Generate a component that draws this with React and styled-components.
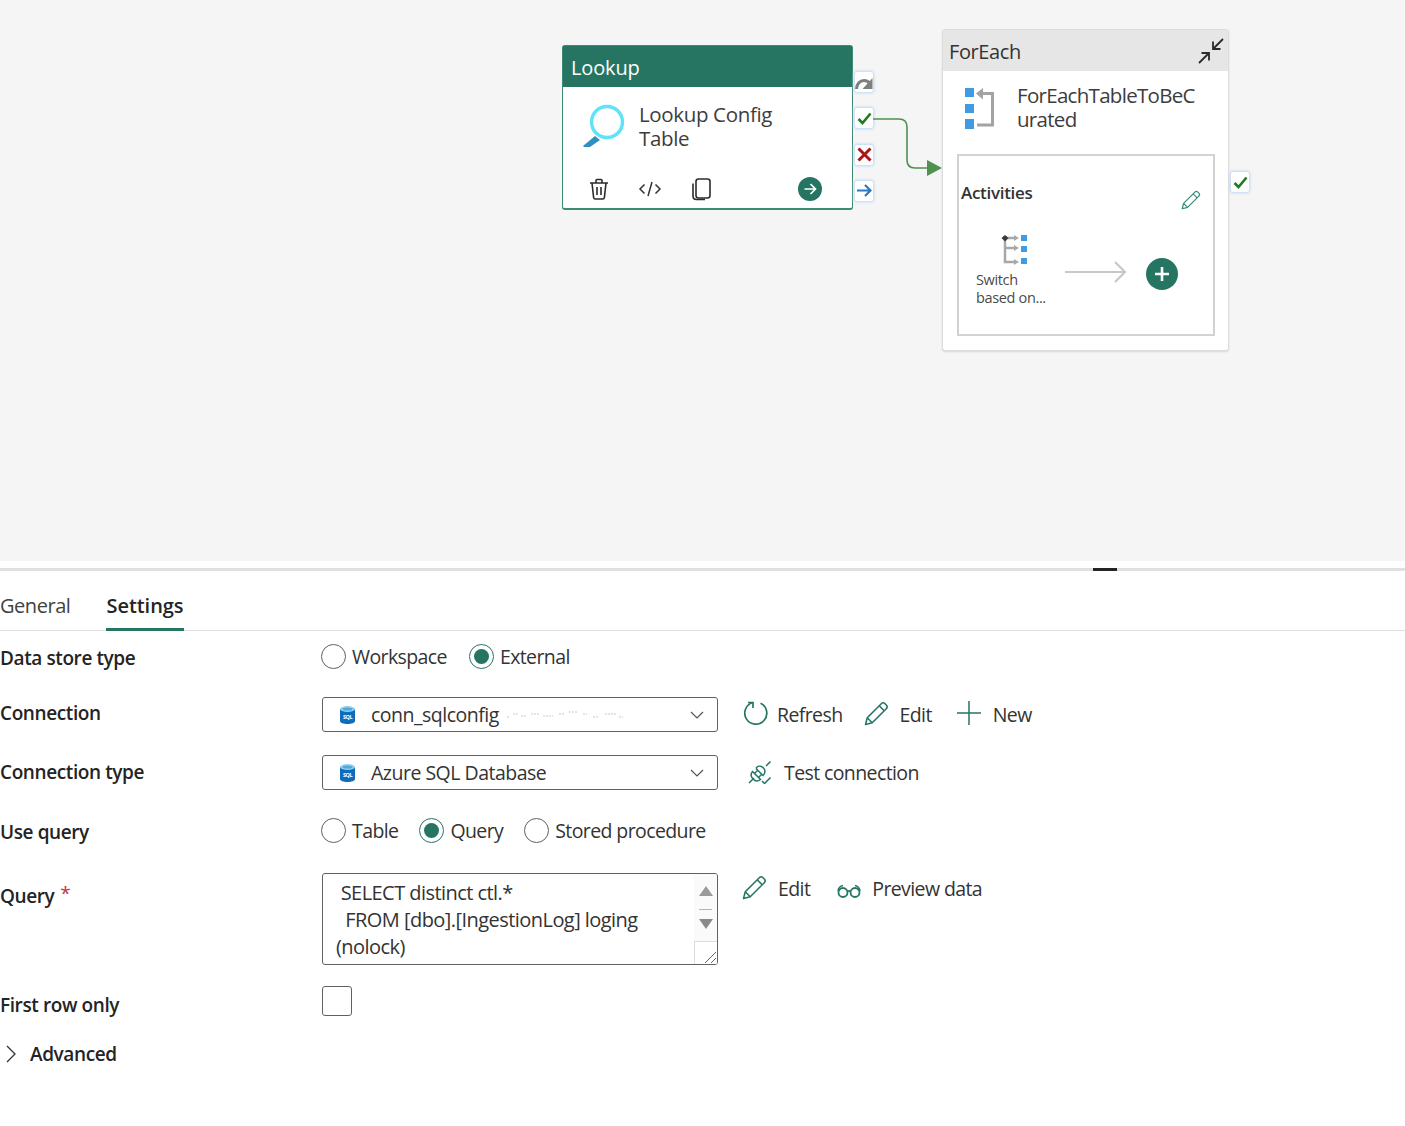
import React from 'react';
import styled, { createGlobalStyle } from 'styled-components';

const GREEN = '#267563';
const INK = '#242424';

const Global = createGlobalStyle`
  html, body { margin: 0; padding: 0; background: #fff; }
  body { font-family: "Open Sans", "Noto Sans", "Liberation Sans", sans-serif; color: ${INK}; }
  * { box-sizing: border-box; }
`;

const Page = styled.div`
  width: 1405px;
  height: 1126px;
  overflow: hidden;
  background: #fff;
`;

/* pipeline canvas: nodes sit on a free canvas */
const Canvas = styled.div`
  position: relative;
  height: 561px;
  background: #f5f5f5;
`;

const Node = styled.div`
  position: absolute;
  left: ${p => p.$x}px;
  top: ${p => p.$y}px;
  width: ${p => p.$w}px;
  height: ${p => p.$h}px;
  display: flex;
  flex-direction: column;
  background: #fff;
  border-radius: 3px;
  border: 1px solid ${p => (p.$active ? '#3f8a76' : '#dcdcdc')};
  border-bottom-width: ${p => (p.$active ? 2 : 1)}px;
  box-shadow: ${p => (p.$active ? 'none' : '0 1px 2px rgba(0,0,0,.12)')};
`;

const NodeHeader = styled.div`
  height: 41px;
  flex: none;
  display: flex;
  align-items: center;
  justify-content: space-between;
  padding: 1px 4px 0 ${p => (p.$active ? 8 : 6)}px;
  font-size: 20px;
  letter-spacing: ${p => (p.$active ? -0.15 : -0.4)}px;
  background: ${p => (p.$active ? GREEN : '#e6e6e6')};
  color: ${p => (p.$active ? '#fff' : '#333')};
`;

const NodeBody = styled.div`
  display: flex;
  align-items: flex-start;
  gap: ${p => p.$gap}px;
  padding: ${p => p.$pad};
  svg { margin-top: ${p => p.$iconTop || 0}px; flex: none; }
`;

const NodeName = styled.div`
  font-size: 20.5px;
  line-height: 24px;
  letter-spacing: ${p => p.$ls}px;
  color: #3d3d3d;
  width: ${p => p.$w}px;
  word-break: ${p => (p.$hardBreak ? 'break-all' : 'normal')};
`;

const NodeTools = styled.div`
  display: flex;
  align-items: center;
  padding: 0 30px 0 24px;
  margin-top: 27px;
  gap: 27px;
  & > :last-child { margin-left: auto; }
`;

const Ports = styled.div`
  position: absolute;
  left: ${p => p.$x}px;
  top: ${p => p.$y}px;
  display: flex;
  flex-direction: column;
  gap: 16.3px;
`;

const Port = styled.div`
  width: 18px;
  height: 20px;
  display: flex;
  align-items: center;
  justify-content: center;
  background: #fff;
  box-shadow: 0 0 3px 1px #bcd6f5;
  border-radius: 2px;
`;

const Wire = styled.svg`
  position: absolute;
  left: 872px;
  top: 110px;
`;

const ActivitiesBox = styled.div`
  margin: 22px 0 0 14px;
  width: 258px;
  height: 182px;
  border: 2px solid #d2d2d2;
  padding: 25px 12px 0 2px;
`;

const ActivitiesHead = styled.div`
  display: flex;
  justify-content: space-between;
  align-items: flex-start;
  font-size: 17px;
  font-weight: 600;
  letter-spacing: -0.3px;
  color: #333;
  line-height: 24px;
  svg { margin-top: 9px; }
`;

const InnerFlow = styled.div`
  display: flex;
  align-items: flex-start;
  margin: 25px 0 0 15px;
`;

const InnerActivity = styled.div`
  width: 80px;
  display: flex;
  flex-direction: column;
  font-size: 14.5px;
  line-height: 18px;
  letter-spacing: -0.35px;
  color: #4a4a4a;
  svg { margin: 0 0 6px 25px; }
`;

const InnerArrow = styled.svg`
  margin: 25px 0 0 9px;
`;

const AddCircle = styled.div`
  width: 32px;
  height: 32px;
  margin: 23px 0 0 19px;
  border-radius: 50%;
  background: ${GREEN};
  display: flex;
  align-items: center;
  justify-content: center;
`;

/* bottom panel */
const Splitter = styled.div`
  position: relative;
  margin-top: 7px;
  height: 3px;
  background: #e0e0e0;
`;

const SplitHandle = styled.div`
  position: absolute;
  left: 1093px;
  top: 0;
  width: 24px;
  height: 3px;
  background: #242424;
`;

const Tabs = styled.div`
  height: 60px;
  display: flex;
  gap: 36px;
  border-bottom: 1px solid #e0e0e0;
`;

const Tab = styled.div`
  position: relative;
  height: 60px;
  flex: none;
  display: flex;
  align-items: center;
  padding-top: 8px;
  font-size: 20px;
  letter-spacing: ${p => (p.$on ? -0.05 : -0.45)}px;
  font-weight: ${p => (p.$on ? 600 : 400)};
  color: ${p => (p.$on ? INK : '#424242')};
  ${p => p.$on && `border-bottom: 3px solid ${GREEN}; padding-top: 11px;`}
`;

const Form = styled.div`
  display: flex;
  flex-direction: column;
  gap: 22px;
  padding-top: 10px;
`;

const Row = styled.div`
  display: grid;
  grid-template-columns: 322px 1fr;
  height: ${p => p.$h}px;
`;

const Label = styled.div`
  font-size: 19px;
  line-height: 26px;
  letter-spacing: -0.4px;
  font-weight: 600;
  color: ${INK};
  padding-top: ${p => p.$top}px;
`;

const Required = styled.span`
  color: #c4314b;
  font-weight: 400;
  margin-left: 6px;
  position: relative;
  top: -3px;
`;

const Controls = styled.div`
  display: flex;
  align-items: flex-start;
`;

const RadioGroup = styled.div`
  display: flex;
  align-items: center;
  gap: ${p => p.$gap}px;
  margin-left: -1px;
  padding-top: ${p => p.$top}px;
`;

const RadioItem = styled.div`
  display: flex;
  align-items: center;
  gap: 6px;
  font-size: 19.5px;
  letter-spacing: -0.6px;
  color: #333;
  line-height: 26px;
`;

const RadioText = styled.span`
  padding-top: 1px;
`;

const RadioMark = styled.span`
  width: 25px;
  height: 25px;
  border-radius: 50%;
  display: flex;
  align-items: center;
  justify-content: center;
  background: #fff;
  border: 1px solid ${p => (p.$on ? GREEN : '#616161')};
  &::after {
    content: '';
    display: ${p => (p.$on ? 'block' : 'none')};
    width: 15px;
    height: 15px;
    border-radius: 50%;
    background: ${GREEN};
  }
`;

const Select = styled.div`
  width: 396px;
  height: 35px;
  display: flex;
  align-items: center;
  position: relative;
  padding: 0 13px 0 17px;
  border: 1px solid #616161;
  border-radius: 3px;
  font-size: 19.5px;
  letter-spacing: -0.5px;
  color: #333;
  svg:first-child { margin-right: 16px; }
  svg:last-child { margin-left: auto; }
`;

const Smudge = styled.svg`
  position: absolute;
  left: 182px;
  top: 6px;
`;

const Actions = styled.div`
  display: flex;
  align-items: center;
  height: 35px;
  gap: ${p => p.$gap}px;
  padding-left: ${p => p.$left}px;
  margin-top: ${p => p.$top || 0}px;
`;

const Action = styled.div`
  display: flex;
  align-items: center;
  gap: ${p => p.$gap || 10}px;
  margin-right: ${p => p.$after || 0}px;
  font-size: 19.5px;
  letter-spacing: -0.6px;
  color: #333;
  svg { margin-top: ${p => p.$lift || 0}px; }
`;

const QueryBox = styled.div`
  position: relative;
  width: 396px;
  height: 92px;
  border: 1px solid #616161;
  border-radius: 3px;
  overflow: hidden;
  padding: 5px 30px 0 13px;
  font-size: 20px;
  line-height: 27px;
  letter-spacing: -0.55px;
  color: #333;
  white-space: pre-wrap;
`;

const ScrollBar = styled.div`
  position: absolute;
  top: 0;
  right: 0;
  width: 23px;
  height: 100%;
  background: #fafafa;
  display: flex;
  flex-direction: column;
  align-items: center;
`;

const ScrollArrow = styled.svg`
  flex: none;
  margin-top: ${p => p.$top || 0}px;
`;

const ScrollRule = styled.div`
  width: 13px;
  height: 1px;
  margin: 13px 0 9px;
  background: #b5b5b5;
`;

const Resizer = styled.div`
  margin-top: auto;
  width: 23px;
  height: 23px;
  background: #fff;
  border-left: 1px solid #dcdcdc;
  border-top: 1px solid #dcdcdc;
  display: flex;
  align-items: flex-end;
  justify-content: flex-end;
`;

const Checkbox = styled.div`
  width: 30px;
  height: 30px;
  border: 1px solid #616161;
  border-radius: 3px;
`;

const Expander = styled.div`
  display: flex;
  align-items: center;
  gap: 14px;
  padding-left: 6px;
  height: 32px;
  font-size: 19px;
  font-weight: 600;
  letter-spacing: -0.4px;
  color: ${INK};
`;

const Ico = ({ size = 24, w, h, box, children, color = 'none' }) => (
  <svg width={w || size} height={h || size} viewBox={box || '0 0 24 24'} fill={color}>{children}</svg>
);

const Pencil = ({ size, color = GREEN }) => (
  <Ico size={size}>
    <path d="M1.5 22.5l1.6-6.4L16.6 2.6c1-1 2.6-1 3.6 0l1.2 1.2c1 1 1 2.6 0 3.6L7.9 20.9z M3.1 16.1l4.8 4.8 M14.6 4.6l4.8 4.8" stroke={color} strokeWidth="1.5" strokeLinejoin="round" />
  </Ico>
);

const SqlIcon = () => (
  <svg width="15" height="18" viewBox="0 0 15 18">
    <path d="M0 3v12c0 1.7 3.4 3 7.5 3s7.5-1.3 7.5-3V3z" fill="#0f6cbd" />
    <ellipse cx="7.5" cy="3" rx="7.5" ry="3" fill="#8fd0ef" />
    <ellipse cx="7.5" cy="3" rx="5" ry="1.6" fill="#50a8dc" />
    <text x="7.5" y="12.5" textAnchor="middle" fontSize="5.5" fontWeight="700" fontFamily="Open Sans" fill="#fff">SQL</text>
  </svg>
);

const Chevron = () => (
  <Ico w={14} h={8} box="0 0 14 8"><path d="M1 1l6 6 6-6" stroke="#555" strokeWidth="1.2" /></Ico>
);

const Check = ({ color = '#1e7d1e' }) => (
  <Ico w={15} h={13} box="0 0 15 13"><path d="M1.5 7l4 4 8-9.5" stroke={color} strokeWidth="2.6" /></Ico>
);

const Radio = ({ on, children }) => (
  <RadioItem><RadioMark $on={on} /><RadioText>{children}</RadioText></RadioItem>
);

export default function App() {
  return (
    <Page>
      <Global />
      <Canvas>
        <Node $active $x={562} $y={45} $w={291} $h={165}>
          <NodeHeader $active>Lookup</NodeHeader>
          <NodeBody $gap={14} $pad="15px 0 0 18px">
            <Ico w={44} h={46} box="0 0 44 46">
              <path d="M2 44l12-10 5 4-10 7H3z" fill="#2f8fc0" />
              <circle cx="26" cy="20" r="15.5" fill="none" stroke="#5fe3fb" strokeWidth="3.4" />
            </Ico>
            <NodeName $w={170} $ls={-0.35}>Lookup Config Table</NodeName>
          </NodeBody>
          <NodeTools>
            <Ico>
              <path d="M3 6h18M9 5.500V3.500c0-.6.500-1 1-1h4c.500 0 1 .4 1 1v2M5 6l1.600 14.500c.1 1 .9 1.500 1.800 1.500h7.200c.9 0 1.700-.5 1.800-1.500L19 6M10 10v8M14 10v8" stroke="#2b2b2b" strokeWidth="1.600" />
            </Ico>
            <Ico>
              <path d="M6.500 7.500L2 12l4.500 4.500M17.500 7.500L22 12l-4.500 4.500M14 5l-4 14" stroke="#333" strokeWidth="1.500" />
            </Ico>
            <Ico>
              <rect x="7" y="2" width="14" height="19" rx="2.500" stroke="#2b2b2b" strokeWidth="1.600" />
              <path d="M4 6.500V19c0 2.200 1.500 3.500 3.500 3.500H16" stroke="#2b2b2b" strokeWidth="1.600" />
            </Ico>
            <Ico>
              <circle cx="12" cy="12" r="12" fill={GREEN} />
              <path d="M6.500 12h10.500M12.500 7l5 5-5 5" stroke="#fff" strokeWidth="1.700" />
            </Ico>
          </NodeTools>
        </Node>

        <Ports $x={855} $y={72}>
          <Port>
            <Ico w={18} h={15} box="0 0 18 15">
              <path d="M1.500 14c0-5 3.500-8.500 7.500-8.500 3 0 5 1.500 6.500 3.500" fill="none" stroke="#7f7f7f" strokeWidth="3" />
              <path d="M17.500 3v11h-10z" fill="#7f7f7f" />
            </Ico>
          </Port>
          <Port><Check /></Port>
          <Port>
            <Ico w={15} h={15} box="0 0 15 15"><path d="M1.500 1.500l12 12M13.500 1.500l-12 12" stroke="#b01313" strokeWidth="3" /></Ico>
          </Port>
          <Port>
            <Ico w={15} h={13} box="0 0 15 13"><path d="M0 6.500h13M8 1l5.500 5.500L8 12" stroke="#2a78c8" strokeWidth="2.200" /></Ico>
          </Port>
        </Ports>

        <Wire width="72" height="68" viewBox="0 0 72 68">
          <path d="M1 9h26c5 0 8 3 8 8v33c0 5 3 8 8 8h13" fill="none" stroke="#4f9150" strokeWidth="1.600" />
          <path d="M55 50l15 8-15 8z" fill="#4f9150" />
        </Wire>

        <Node $x={942} $y={29} $w={287} $h={322}>
          <NodeHeader>
            ForEach
            <Ico size={26} box="0 0 26 26">
              <path d="M15 11L25 1M15 3.500V11h7.500M11 15L1 25M3.500 15H11v7.500" stroke="#2b2b2b" strokeWidth="1.800" />
            </Ico>
          </NodeHeader>
          <NodeBody $gap={21} $pad="12px 0 0 21px" $iconTop={5}>
            <Ico w={32} h={44} box="0 0 32 44">
              <path d="M1 0h9v9H1zM1 16h9v9H1zM1 31h9v10H1z" fill="#3f9ce3" />
              <path d="M13 37h15.500V5.500H17" fill="none" stroke="#a3a3a3" strokeWidth="3" />
              <path d="M19 0v11.500L12 5.500z" fill="#a3a3a3" />
            </Ico>
            <NodeName $w={180} $ls={-0.7} $hardBreak>ForEachTableToBeCurated</NodeName>
          </NodeBody>
          <ActivitiesBox>
            <ActivitiesHead>
              Activities
              <Pencil size={20} color="#3b8d79" />
            </ActivitiesHead>
            <InnerFlow>
              <InnerActivity>
                <Ico w={28} h={30} box="0 0 28 30">
                  <path d="M4 3v24h9M4 13h9M4 3h9" fill="none" stroke="#a8a8a8" strokeWidth="2.500" />
                  <path d="M13 0l5 3-5 3zM13 10l5 3-5 3zM13 24l5 3-5 3z" fill="#a8a8a8" />
                  <path d="M4 0l3.500 3L4 6.500.500 3z" fill="#3a3a3a" />
                  <path d="M20 0h6v6h-6zM20 11h6v6h-6zM20 23h6v6h-6z" fill="#3f9ce3" />
                </Ico>
                <span>Switch</span>
                <span>based on...</span>
              </InnerActivity>
              <InnerArrow width="62" height="24" viewBox="0 0 62 24">
                <path d="M0 12h60M50 2l10 10-10 10" fill="none" stroke="#c8c8c8" strokeWidth="2.200" />
              </InnerArrow>
              <AddCircle>
                <Ico w={14} h={14} box="0 0 14 14"><path d="M7 0v14M0 7h14" stroke="#fff" strokeWidth="2.600" /></Ico>
              </AddCircle>
            </InnerFlow>
          </ActivitiesBox>
        </Node>

        <Ports $x={1231} $y={172}>
          <Port><Check /></Port>
        </Ports>
      </Canvas>

      <Splitter><SplitHandle /></Splitter>

      <Tabs>
        <Tab>General</Tab>
        <Tab $on>Settings</Tab>
      </Tabs>

      <Form>
        <Row $h={34}>
          <Label $top={4}>Data store type</Label>
          <Controls>
            <RadioGroup $top={2} $gap={22}>
              <Radio>Workspace</Radio>
              <Radio on>External</Radio>
            </RadioGroup>
          </Controls>
        </Row>

        <Row $h={36}>
          <Label $top={3}>Connection</Label>
          <Controls>
            <Select>
              <SqlIcon />
              conn_sqlconfig
              <Smudge width="130" height="26" viewBox="0 0 130 26">
                <path d="M2 13h3M8 10h5M16 12h6M26 10h8M38 12h10M54 10h6M64 8h8M78 10h4M88 13h6M100 10h12M114 13h4" stroke="#c9c9c9" strokeWidth="1" strokeDasharray="2 1" />
              </Smudge>
              <Chevron />
            </Select>
            <Actions $gap={21} $left={26}>
              <Action $gap={9} $lift={-3}>
                <Ico>
                  <path d="M9 1.500A11 11 0 1 0 16.500 2.200" stroke={GREEN} strokeWidth="1.700" />
                  <path d="M4 1.500L9 1.500L9 7" stroke={GREEN} strokeWidth="1.700" />
                </Ico>
                Refresh
              </Action>
              <Action $gap={11} $lift={-3} $after={4}><Pencil size={25} />Edit</Action>
              <Action $gap={12} $lift={-4}>
                <Ico><path d="M12 0v24M0 12h24" stroke={GREEN} strokeWidth="1.500" /></Ico>
                New
              </Action>
            </Actions>
          </Controls>
        </Row>

        <Row $h={36}>
          <Label $top={4}>Connection type</Label>
          <Controls>
            <Select>
              <SqlIcon />
              Azure SQL Database
              <Chevron />
            </Select>
            <Actions $gap={0} $left={30}>
              <Action $gap={12} $lift={-2}>
                <Ico>
                  <path d="M1 23l5-5M4.500 11.500l8 8c-2.500 2-5.500 1.500-7.500-.5s-2.500-5-.5-7.500zM8.500 9l6.500 6.500c2.500-2 2.500-5.500.5-7.500s-5-2.500-7-.5zM18 6l4.500-4.500M7 13l3-3M11 17l3-3" stroke={GREEN} strokeWidth="1.500" />
                  <path d="M14 21l2.500 2.500 6-6" stroke={GREEN} strokeWidth="1.500" />
                </Ico>
                Test connection
              </Action>
            </Actions>
          </Controls>
        </Row>

        <Row $h={38}>
          <Label $top={6}>Use query</Label>
          <Controls>
            <RadioGroup $top={4} $gap={21}>
              <Radio>Table</Radio>
              <Radio on>Query</Radio>
              <Radio>Stored procedure</Radio>
            </RadioGroup>
          </Controls>
        </Row>

        <Row $h={91}>
          <Label $top={10}>Query<Required>*</Required></Label>
          <Controls>
            <QueryBox>
              {' SELECT distinct ctl.*\n  FROM [dbo].[IngestionLog] loging\n(nolock)'}
              <ScrollBar>
                <ScrollArrow $top={12} width="14" height="10" viewBox="0 0 14 10"><path d="M7 0l7 10H0z" fill="#9a9a9a" /></ScrollArrow>
                <ScrollRule />
                <ScrollArrow width="14" height="10" viewBox="0 0 14 10"><path d="M0 0h14L7 10z" fill="#8a8a8a" /></ScrollArrow>
                <Resizer>
                  <svg width="14" height="14" viewBox="0 0 14 14"><path d="M2 13L13 2M8 13l5-5" stroke="#666" strokeWidth="1" /></svg>
                </Resizer>
              </ScrollBar>
            </QueryBox>
            <Actions $gap={27} $left={24} $top={-2}>
              <Action $gap={11} $lift={-2}><Pencil size={25} />Edit</Action>
              <Action $gap={11} $lift={2}>
                <Ico w={24} h={16} box="0 0 24 16">
                  <circle cx="6" cy="10.500" r="4.500" stroke={GREEN} strokeWidth="1.800" />
                  <circle cx="18" cy="10.500" r="4.500" stroke={GREEN} strokeWidth="1.800" />
                  <path d="M10.500 9.500c1-.8 2-.8 3 0M1 9c.5-3 2-5 5-5.500M23 9c-.5-3-2-5-5-5.500" stroke={GREEN} strokeWidth="1.600" />
                </Ico>
                Preview data
              </Action>
            </Actions>
          </Controls>
        </Row>

        <Row $h={30}>
          <Label $top={6}>First row only</Label>
          <Controls><Checkbox /></Controls>
        </Row>

        <Expander>
          <Ico w={10} h={18} box="0 0 10 18"><path d="M1 1l8 8-8 8" stroke="#333" strokeWidth="1.300" /></Ico>
          Advanced
        </Expander>
      </Form>
    </Page>
  );
}
